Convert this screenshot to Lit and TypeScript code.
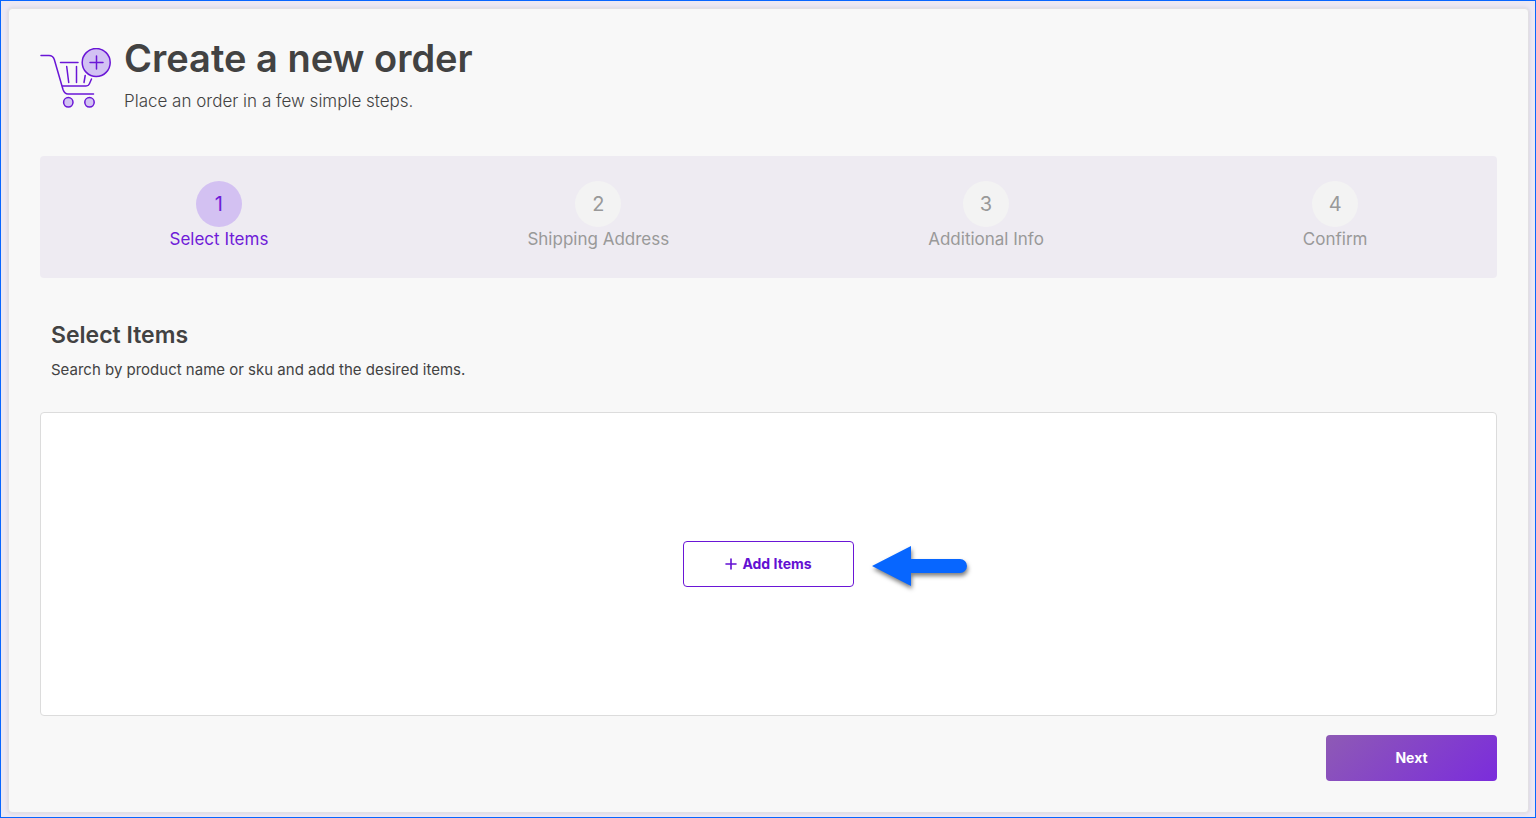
import { LitElement, html, css, svg } from "lit";
import { customElement, state } from "lit/decorators.js";
import { classMap } from "lit/directives/class-map.js";

const STEPS = ["Select Items", "Shipping Address", "Additional Info", "Confirm"];

const cartIcon = svg`
  <svg class="cart" viewBox="0 0 72 62" width="72" height="62" fill="none"
    stroke="#6a16d6" stroke-width="1.5" stroke-linecap="round" stroke-linejoin="round" aria-hidden="true">
    <path d="M1 7.5H9Q13 7.5 14.3 11.5L23 41.5Q24.6 46 28 46H53.5" />
    <path d="M20.5 14.5H38M22.6 38H46Q48.5 38 49.3 36L51.5 31" />
    <path d="M26.7 18.5L28.7 34.5M36.5 18.5V34.5M45.2 27.5L44 34.5" />
    <circle cx="56.2" cy="14.5" r="14" fill="#d2c2f3" />
    <path d="M56.5 8V21M50 14.5H63" />
    <circle cx="28.3" cy="54.3" r="4.7" fill="#d2c2f3" />
    <circle cx="49.5" cy="54.3" r="4.7" fill="#d2c2f3" />
  </svg>`;

@customElement("app-root")
export class AppRoot extends LitElement {
  @state() private current = 0;

  static styles = css`
    :host {
      display: flex;
      box-sizing: border-box;
      min-height: 100vh;
      padding: 7px 6px 4px 7px;
      border: 1px solid #0866ff;
      background: #ece8f3;
      color: #424242;
      font-family: Inter, "Open Sans", sans-serif;
    }
    .card {
      flex: 1;
      display: flex;
      flex-direction: column;
      min-width: 0;
      padding: 26px 31px 31px;
      border: 1px solid #e2e0e4;
      border-radius: 4px;
      background: #f8f8f8;
      box-shadow: 0 0 4px rgba(0, 0, 0, 0.1);
    }
    .header {
      display: flex;
      gap: 12px;
      padding-bottom: 43px;
    }
    .cart {
      flex: none;
      margin-top: 13px;
    }
    h1,
    h2,
    p,
    ol {
      margin: 0;
    }
    h1 {
      font-size: 38px;
      line-height: 46px;
      font-weight: 600;
    }
    .lead {
      margin-top: 8px;
      font-size: 17px;
      line-height: 24px;
      font-weight: 300;
    }
    .steps {
      display: flex;
      justify-content: space-around;
      padding: 25px 0 26px;
      border-radius: 4px;
      background: #eeebf2;
      list-style: none;
    }
    .step {
      display: flex;
      flex-direction: column;
      align-items: center;
      color: #999;
      font-size: 17px;
      line-height: 25px;
    }
    .number {
      width: 46px;
      border-radius: 50%;
      background: #f3f3f3;
      font-size: 20px;
      line-height: 46px;
      text-align: center;
    }
    .active {
      color: #6f1bd8;
    }
    .active .number {
      background: #d3c1f2;
    }
    .intro {
      padding: 42px 11px 30px;
    }
    h2 {
      font-size: 23px;
      line-height: 30px;
      font-weight: 600;
    }
    .hint {
      margin-top: 8px;
      font-size: 15px;
      line-height: 24px;
    }
    .items {
      flex: 1;
      display: grid;
      place-items: center;
      border: 1px solid #dcdcdc;
      border-radius: 4px;
      background: #fff;
    }
    .add-wrap {
      position: relative;
    }
    button {
      display: flex;
      align-items: center;
      justify-content: center;
      gap: 5px;
      box-sizing: border-box;
      width: 171px;
      height: 46px;
      padding: 0;
      border-radius: 4px;
      font: 700 14px/20px Inter, "Open Sans", sans-serif;
      cursor: pointer;
    }
    .add {
      border: 1px solid #6a16d6;
      background: #fff;
      color: #6310d2;
    }
    .arrow {
      position: absolute;
      top: 0;
      left: 100%;
      margin-left: 13px;
      filter: drop-shadow(1px 3px 2px rgba(0, 0, 0, 0.5));
    }
    .footer {
      display: flex;
      justify-content: flex-end;
      padding-top: 19px;
    }
    .next {
      border: 0;
      background: linear-gradient(135deg, #8e5ab5, #7b2cdc);
      color: #fff;
    }
  `;

  private advance() {
    this.current = Math.min(this.current + 1, STEPS.length - 1);
  }

  render() {
    return html`
      <main class="card">
        <header class="header">
          ${cartIcon}
          <div>
            <h1>Create a new order</h1>
            <p class="lead">Place an order in a few simple steps.</p>
          </div>
        </header>
        <ol class="steps">
          ${STEPS.map(
            (label, i) => html`
              <li class=${classMap({ step: true, active: i === this.current })}>
                <span class="number">${i + 1}</span>
                <span>${label}</span>
              </li>`
          )}
        </ol>
        <div class="intro">
          <h2>Select Items</h2>
          <p class="hint">Search by product name or sku and add the desired items.</p>
        </div>
        <section class="items">
          <div class="add-wrap">
            <button class="add" type="button">
              <svg width="12" height="12" viewBox="0 0 12 12" stroke="currentColor" stroke-width="1.6"
                stroke-linecap="round" aria-hidden="true"><path d="M6 1V11M1 6H11" /></svg>
              Add Items
            </button>
            <svg class="arrow" width="104" height="48" viewBox="0 0 104 48" fill="#0766ff" aria-hidden="true">
              <path d="M5 25L44 5V18H93A7 7 0 0 1 93 32H44V45Z" />
            </svg>
          </div>
        </section>
        <footer class="footer">
          <button class="next" type="button" @click=${this.advance}>Next</button>
        </footer>
      </main>
    `;
  }
}
